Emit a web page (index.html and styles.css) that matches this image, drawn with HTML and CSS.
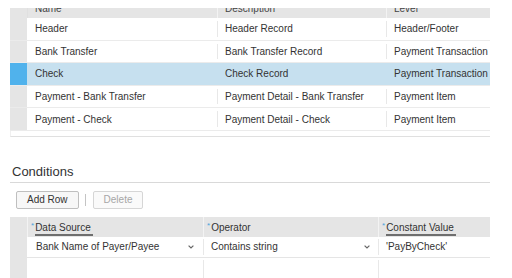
FILE: index.html
```html
<!DOCTYPE html>
<html>
<head>
<meta charset="utf-8">
<link rel="stylesheet" href="styles.css">
</head>
<body>
<div class="page">
  <div class="rtable">
    <div class="grid1 thead">
      <div class="sel"></div>
      <div class="hc first"><span class="lbl">Name</span></div>
      <div class="hc"><span class="lbl">Description</span></div>
      <div class="hc"><span class="lbl">Level</span></div>
    </div>
    <div class="grid1 row">
      <div class="sel"></div>
      <div class="c"><div class="in first">Header</div></div>
      <div class="c"><div class="in">Header Record</div></div>
      <div class="c"><div class="in">Header/Footer</div></div>
    </div>
    <div class="grid1 row">
      <div class="sel"></div>
      <div class="c"><div class="in first">Bank Transfer</div></div>
      <div class="c"><div class="in">Bank Transfer Record</div></div>
      <div class="c"><div class="in">Payment Transaction</div></div>
    </div>
    <div class="grid1 row selected">
      <div class="sel"></div>
      <div class="c"><div class="in first">Check</div></div>
      <div class="c"><div class="in">Check Record</div></div>
      <div class="c"><div class="in">Payment Transaction</div></div>
    </div>
    <div class="grid1 row">
      <div class="sel"></div>
      <div class="c"><div class="in first">Payment - Bank Transfer</div></div>
      <div class="c"><div class="in">Payment Detail - Bank Transfer</div></div>
      <div class="c"><div class="in">Payment Item</div></div>
    </div>
    <div class="grid1 row">
      <div class="sel"></div>
      <div class="c"><div class="in first">Payment - Check</div></div>
      <div class="c"><div class="in">Payment Detail - Check</div></div>
      <div class="c"><div class="in">Payment Item</div></div>
    </div>
    <div class="tfoot"></div>
  </div>

  <div class="title">Conditions</div>

  <div class="toolbar">
    <button class="btn">Add Row</button>
    <div class="vsep"></div>
    <button class="btn disabled">Delete</button>
  </div>

  <div class="ctable">
    <div class="grid2 chead">
      <div class="sel"></div>
      <div class="chc"><span class="req">*</span><span class="sortlbl">Data Source</span></div>
      <div class="chc"><span class="req">*</span><span class="plainlbl">Operator</span></div>
      <div class="chc"><span class="req">*</span><span class="sortlbl">Constant Value</span></div>
    </div>
    <div class="grid2 crow">
      <div class="sel"></div>
      <div class="c"><div class="in first ds"><span class="val">Bank Name of Payer/Payee</span><svg class="chev" width="6" height="4" viewBox="0 0 6 4"><polyline points="0.6,0.6 3,3 5.4,0.6" fill="none" stroke="#666" stroke-width="1.2"/></svg></div></div>
      <div class="c"><div class="in op"><span class="val">Contains string</span><svg class="chev" width="6" height="4" viewBox="0 0 6 4"><polyline points="0.6,0.6 3,3 5.4,0.6" fill="none" stroke="#666" stroke-width="1.2"/></svg></div></div>
      <div class="c"><div class="in">'PayByCheck'</div></div>
    </div>
    <div class="grid2 crow last">
      <div class="sel"></div>
      <div class="c"><div class="in first"></div></div>
      <div class="c"><div class="in"></div></div>
      <div class="c"><div class="in"></div></div>
    </div>
  </div>
</div>
</body>
</html>
```

FILE: styles.css
```css
* { box-sizing: border-box; }

body {
  margin: 0;
  font-family: "Liberation Sans", Arial, sans-serif;
  font-size: 10px;
  color: #333;
  background: #fff;
}

.page {
  width: 480px;
  margin-left: 10px;
  padding-top: 8px;
}

/* top table */
.grid1 {
  display: grid;
  grid-template-columns: 17px 190px 169px 1fr;
}

.thead {
  height: 10px;
  background: #e5e5e5;
  overflow: hidden;
}

.hc {
  overflow: hidden;
  border-left: 1px solid #f3f3f3;
  padding-left: 7px;
  color: #444;
}

.hc.first {
  border-left: 1px solid #e0e0e0;
}

.lbl {
  display: block;
  line-height: 12px;
  margin-top: -5px;
  white-space: nowrap;
}

.sel {
  background: #e5e5e5;
}

.row {
  height: 22.6px;
  border-bottom: 1px solid #ebebeb;
}

.c {
  display: flex;
  padding: 3px 0;
  min-width: 0;
}

.in {
  flex: 1;
  display: flex;
  align-items: center;
  border-left: 1px solid #e8e8e8;
  padding-left: 7px;
  white-space: nowrap;
  overflow: hidden;
}

.in.first {
  border-left: none;
  padding-left: 8px;
}

.row.selected {
  background: #c6e0ef;
}

.row.selected .sel {
  background: #50b2ec;
}

.row.selected .in {
  border-left-color: #c6e0ef;
}

.tfoot {
  height: 6px;
  border-bottom: 1px solid #e0e0e0;
  border-left: 1px solid #f0f0f0;
}

/* conditions */
.title {
  margin-top: 27px;
  font-size: 13px;
  line-height: 16px;
  padding-left: 2px;
  padding-bottom: 2px;
  border-bottom: 1px solid #d9d9d9;
  color: #333;
}

.toolbar {
  display: flex;
  align-items: center;
  margin-top: 8px;
  padding-left: 6px;
}

.btn {
  font-family: "Liberation Sans", Arial, sans-serif;
  font-size: 10px;
  height: 18px;
  line-height: 16px;
  padding: 0 10px;
  border: 1px solid #bfbfbf;
  border-radius: 2px;
  background: #f7f7f7;
  color: #333;
  margin: 0;
}

.btn.disabled {
  color: #a6a6a6;
  border-color: #d6d6d6;
  background: #fafafa;
}

.vsep {
  width: 1px;
  height: 12px;
  background: #c4c4c4;
  margin: 0 7px 0 6px;
}

/* conditions table */
.ctable {
  margin-top: 8px;
}

.grid2 {
  display: grid;
  grid-template-columns: 17px 176px 175px 1fr;
}

.chead {
  height: 20px;
  background: #e5e5e5;
}

.chc {
  display: flex;
  align-items: center;
  border-left: 1px solid #f3f3f3;
  padding-left: 3px;
  white-space: nowrap;
  color: #333;
}

.req {
  color: #4aa3dc;
  font-size: 8px;
  align-self: flex-start;
  margin-top: 4px;
  margin-right: 1px;
}

.sortlbl {
  line-height: 12px;
  border-bottom: 2px solid #6e6e6e;
  padding: 0 2px 0 0;
  margin-top: 4px;
}

.plainlbl {
  line-height: 12px;
  padding-bottom: 2px;
  margin-top: 4px;
}

.crow {
  height: 21px;
  border-bottom: 1px solid #e5e5e5;
}

.crow.last {
  height: 22px;
  border-bottom: none;
}

.crow .c {
  padding: 2px 0;
}

.crow .in.first {
  padding-left: 9px;
}

.ds, .op {
  padding-right: 9px;
}

.op {
  padding-right: 8px;
}

.val {
  flex: 1;
}

.chev {
  display: block;
  flex: none;
}
```
